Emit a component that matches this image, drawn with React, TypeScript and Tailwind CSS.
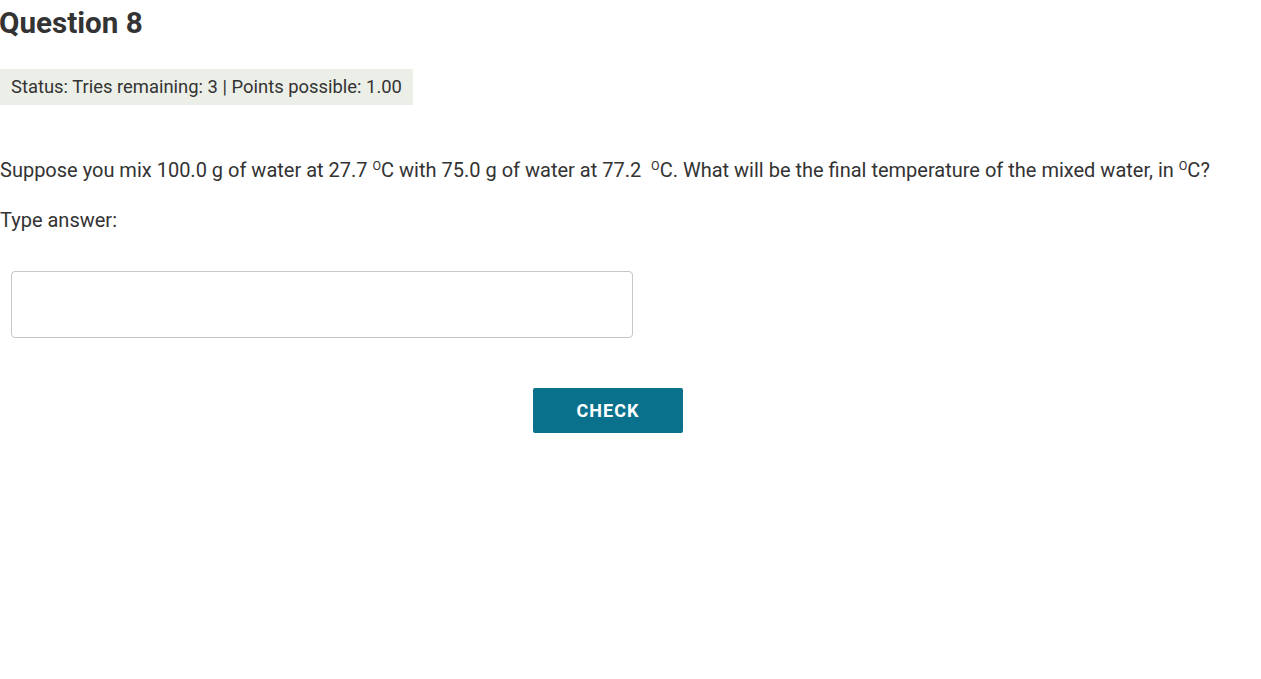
import React from "react";

function Deg() {
  return <span className="text-[12.5px] leading-[0] align-[7px]">O</span>;
}

export default function App() {
  return (
    <div className="min-h-[679px] bg-white text-[#333333] font-['Roboto',sans-serif]">
      <h1 className="text-[29.6px] font-bold leading-[46px] text-[#333333] -ml-[1px]">Question 8</h1>
      <div className="mt-[23px] inline-block bg-[#ecefe8] px-[11px] py-[7px] text-[18.4px] leading-[22px]">
        Status: Tries remaining: 3 | Points possible: 1.00
      </div>
      <p className="mt-[50px] text-[20px] leading-[30px]">
        Suppose you mix 100.0 g of water at 27.7 <Deg />C with 75.0 g of water at 77.2{" "}
        {"\u00a0"}<Deg />C. What will be the final temperature of the mixed water, in <Deg />C?
      </p>
      <p className="mt-[20px] text-[20px] leading-[30px]">Type answer:</p>
      <div className="mt-[36px] pl-[11px]">
        <input
          type="text"
          className="w-[622px] h-[67px] border border-[#c6c6c6] rounded-[4px] outline-none px-3 text-[18px]"
        />
      </div>
      <div className="mt-[50px] pl-[533px]">
        <button className="w-[150px] h-[45px] bg-[#0a718c] rounded-[2px] text-white text-[18px] font-bold tracking-[1px]">
          CHECK
        </button>
      </div>
    </div>
  );
}
